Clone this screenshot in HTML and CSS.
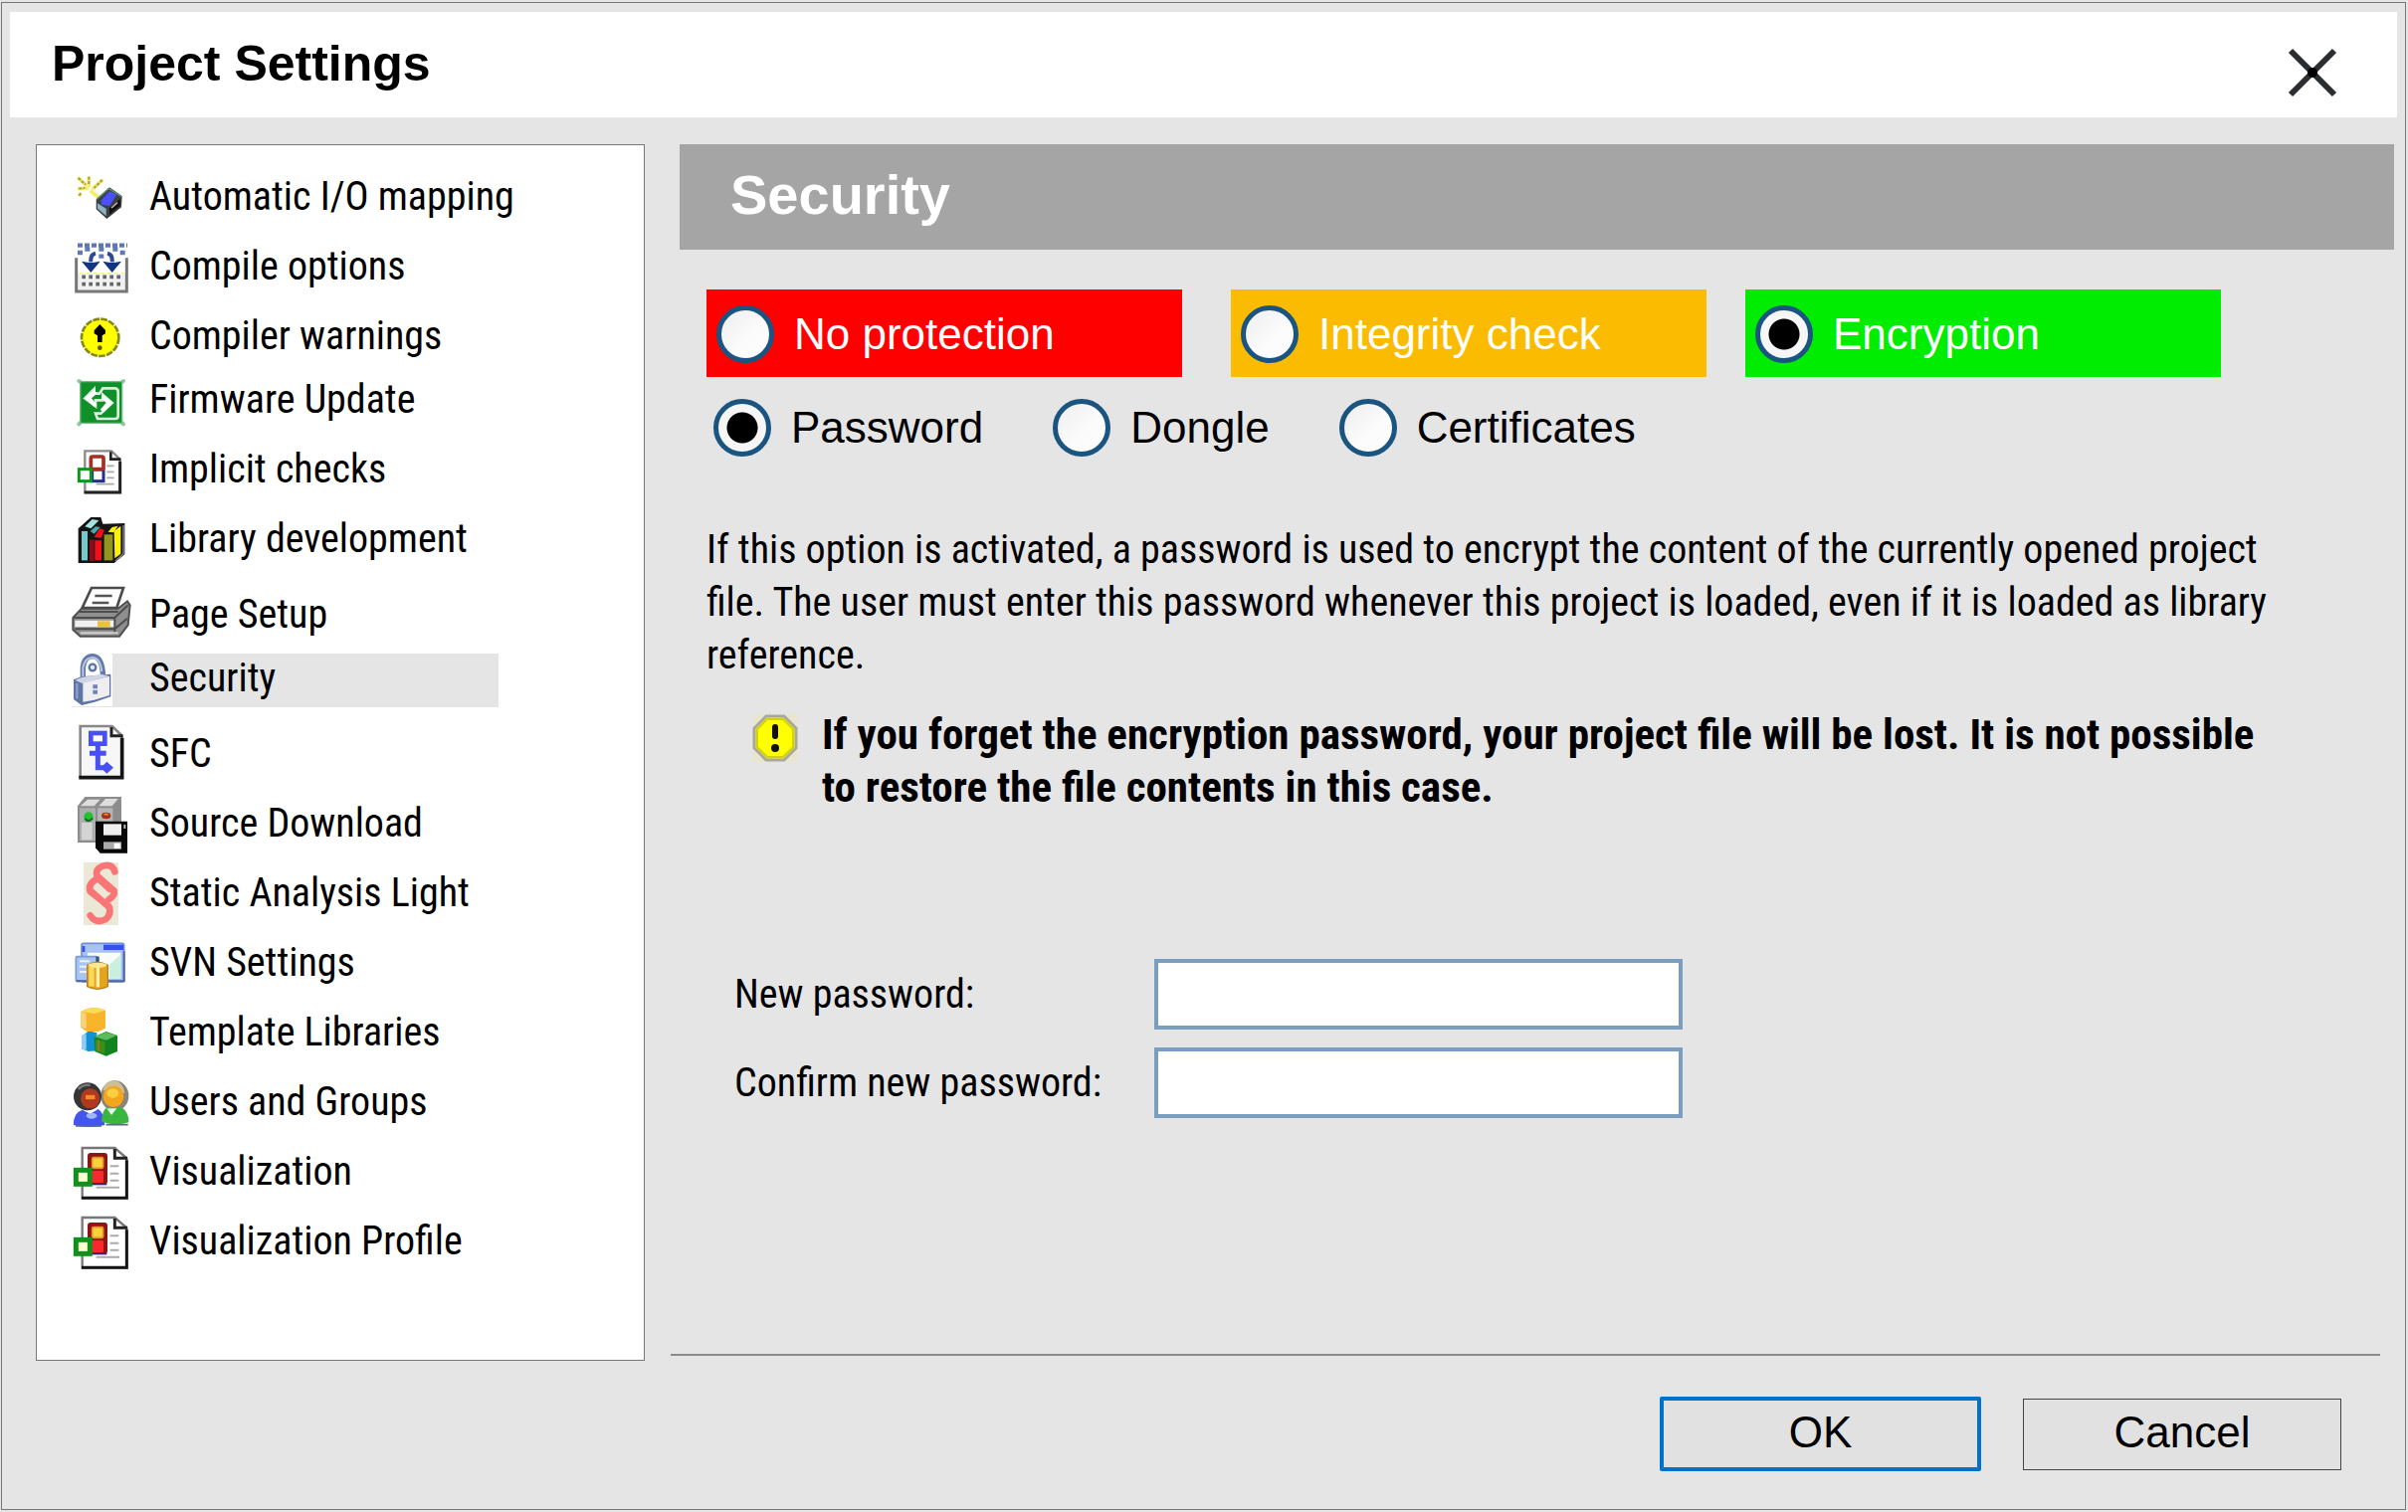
FILE: index.html
```html
<!DOCTYPE html>
<html lang="en">
<head>
  <meta charset="UTF-8">
  <title>Project Settings</title>
  <link rel="stylesheet" href="styles.css">
</head>
<body>
  <div class="dialog">
    <header class="titlebar">
      <h1>Project Settings</h1>
      <button type="button" class="close" aria-label="Close">
        <svg viewBox="0 0 50 50"><path d="M3 3L47 47M47 3L3 47" stroke="#2b2e30" stroke-width="6"/><circle cx="25" cy="25" r="5"/></svg>
      </button>
    </header>

    <div class="body">
      <nav class="sidebar">
        <ul>
          <li><a href="#">
            <svg class="icon" viewBox="36 36 180 162">
              <path d="M54 52L82 76M88 48V80M130 58L98 88M54 86L88 84M58 108L64 98M92 92L116 112" stroke="#f4ee6a" stroke-width="11"/>
              <path d="M56 54L78 74M88 50V76M128 60L104 84M58 86L76 84M58 107L64 100" stroke="#a79a4c" stroke-width="6" stroke-dasharray="9 4"/>
              <path d="M110 118L150 82L188 108L186 142L142 177L110 148Z" fill="#3b4143"/>
              <path d="M124 122L150 94L172 104L150 138L126 134Z" fill="#4a50fa"/>
              <path d="M114 130L140 146V168L114 146Z" fill="#8fb3c0"/>
              <path d="M150 144L182 118V138L150 164Z" fill="#111"/>
              <path d="M156 144L174 128" stroke="#c9a9a9" stroke-width="5"/>
              <path d="M112 118L148 86L186 110" fill="none" stroke="#5f8d72" stroke-width="4"/>
            </svg>
            <span>Automatic I/O mapping</span></a></li>
          <li><a href="#">
            <svg class="icon" viewBox="36 249 180 162">
              <path d="M50 298V399H202V298" fill="#f1f1f1" stroke="#777" stroke-width="9"/>
              <path d="M56 290H196V346H56Z" fill="#fff"/>
              <path d="M54 260H204M54 282H70M182 282H200M76 272H92M118 272H134M160 272H176M118 293H134" stroke="#6079b5" stroke-width="13" stroke-dasharray="15 6"/>
              <path d="M108 284Q92 288 94 310M144 284Q160 288 158 310" fill="none" stroke="#2d4b93" stroke-width="12"/>
              <path d="M66 308L88 312H100L122 308L94 342ZM130 308L152 312H164L186 308L158 342Z" fill="#123681"/>
              <path d="M67 355H190M67 377H190" stroke="#666" stroke-width="11" stroke-dasharray="11 10"/>
              <path d="M60 344H194" stroke="#f5ef8a" stroke-width="4" stroke-dasharray="12 9"/>
            </svg>
            <span>Compile options</span></a></li>
          <li><a href="#">
            <svg class="icon" viewBox="36 459 180 162">
              <circle cx="122" cy="538" r="56" fill="#ff0" stroke="#85891a" stroke-width="8" stroke-dasharray="20 4"/>
              <path d="M121 498L138 516V526L128 532V552H114V532L104 526V516Z"/>
              <circle cx="121" cy="569" r="7" fill="#5c5c00"/>
            </svg>
            <span>Compiler warnings</span></a></li>
          <li class="tight"><a href="#">
            <svg class="icon" viewBox="36 48 180 162">
              <path d="M58 66L66 72M192 66L184 72M58 196L66 188M192 196L184 188" stroke="#8cc89c" stroke-width="12" stroke-linecap="round"/>
              <path d="M62 68H188V193H62Z" fill="#109028" stroke="#74bd88" stroke-width="4"/>
              <path d="M76 118L104 90V104H120L130 88H168Q176 90 176 98V172Q176 180 168 180H114L108 164H124L158 132L130 108V124H108V142Z" fill="none" stroke="#d9f0df" stroke-width="8"/>
              <path d="M76 118L104 92L112 104L96 118L112 138L104 144ZM158 132L132 108L126 118L140 132L122 152L132 160Z" fill="#fff"/>
            </svg>
            <span>Firmware Update</span></a></li>
          <li><a href="#">
            <svg class="icon" viewBox="36 258 180 162">
              <path d="M76 277H156L182 302V402H76Z" fill="#fff" stroke="#8b8b8b" stroke-width="7"/>
              <path d="M182 308V402H74" fill="none" stroke="#222" stroke-width="9"/>
              <path d="M154 280V302H184" fill="none" stroke="#222" stroke-width="8"/>
              <path d="M142 322H164M142 340H164M142 358H164M110 377H164" stroke="#aaa" stroke-width="5"/>
              <rect x="98" y="333" width="34" height="35" fill="#fff" stroke="#232d92" stroke-width="9"/>
              <rect x="94" y="294" width="38" height="38" rx="5" fill="#fff" stroke="#a53020" stroke-width="11"/>
              <rect x="58" y="332" width="36" height="36" fill="#fff" stroke="#10961d" stroke-width="9"/>
            </svg>
            <span>Implicit checks</span></a></li>
          <li><a href="#">
            <svg class="icon" viewBox="36 471 180 162">
              <path d="M56 514L94 480H124L130 500L196 498V592L164 618H56Z" fill="#151515"/>
              <path d="M66 522H84V610H66Z" fill="#79c8ca"/>
              <path d="M76 508L98 486L118 490L94 514Z" fill="#a5e4e0"/>
              <path d="M92 522L108 508L122 510L104 530Z" fill="#4ba7ad"/>
              <path d="M90 548H104V612H90Z" fill="#8a0c18"/>
              <path d="M106 550H126V610H106ZM104 540L120 514L134 518L126 542Z" fill="#ef1018"/>
              <path d="M134 532H160V610H134Z" fill="#94951f"/>
              <path d="M164 522L184 506V590L166 604ZM146 524L158 510L176 506L162 526Z" fill="#fff200"/>
              <path d="M192 504V590L168 612" fill="none" stroke="#87869a" stroke-width="4"/>
            </svg>
            <span>Library development</span></a></li>
          <li class="loose"><a href="#">
            <svg class="icon" viewBox="36 72 180 162">
              <path d="M40 156L66 128H176L204 106L212 118L206 178L180 212H62L40 192Z" fill="#8f8f8f" stroke="#505050" stroke-width="6"/>
              <path d="M96 66H192L172 126H68Z" fill="#fff" stroke="#4b4b4b" stroke-width="8"/>
              <path d="M106 90H158M98 111H148" stroke="#555" stroke-width="7"/>
              <path d="M46 164H166V184H46Z" fill="#f1f1f1"/>
              <path d="M44 156H166L206 118M46 190H166L204 158M166 158V206M60 138H176" fill="none" stroke="#4d4d4d" stroke-width="6"/>
              <path d="M62 202H176" stroke="#ccc" stroke-width="7"/>
              <path d="M114 175H152" stroke="#e8c33c" stroke-width="18"/>
            </svg>
            <span>Page Setup</span></a></li>
          <li class="tight selected"><a href="#" aria-current="page">
            <svg class="icon" viewBox="36 264 180 162">
              <path d="M36 264H159V423H36Z" fill="#fff"/>
              <path d="M70 344V306Q74 272 100 272Q126 274 130 322V342" fill="none" stroke="#6279aa" stroke-width="16"/>
              <path d="M70 342V306Q76 276 100 276Q122 278 127 318" fill="none" stroke="#bcc7df" stroke-width="6"/>
              <circle cx="99" cy="306" r="10" fill="#e9ecf4" stroke="#5d74a6" stroke-width="7"/>
              <path d="M42 342L66 334L154 326V394L106 410L66 420L42 402Z" fill="#5f75a8"/>
              <path d="M70 352L150 332V390L104 404L70 410Z" fill="#eeeef0"/>
              <path d="M46 344L68 354L148 332L126 326L66 336Z" fill="#cfd5e3"/>
              <path d="M52 354V400" stroke="#8ea0c8" stroke-width="7"/>
              <path d="M107 358V390" stroke="#7183b2" stroke-width="14" stroke-dasharray="12 4"/>
            </svg>
            <span>Security</span></a></li>
          <li class="loose"><a href="#">
            <svg class="icon" viewBox="36 486 180 162">
              <path d="M62 477H158L188 506V632H62Z" fill="#f7f7f7" stroke="#888" stroke-width="8"/>
              <path d="M188 512V632H58" fill="none" stroke="#151515" stroke-width="11"/>
              <path d="M156 480V506H190" fill="none" stroke="#222" stroke-width="9"/>
              <rect x="94" y="498" width="42" height="32" fill="#fff" stroke="#4850f5" stroke-width="14"/>
              <path d="M115 530V602H140M90 559H140" fill="none" stroke="#4850f5" stroke-width="15"/>
              <path d="M142 584L162 602L142 620L124 602Z" fill="#4850f5"/>
            </svg>
            <span>SFC</span></a></li>
          <li><a href="#">
            <svg class="icon" viewBox="36 66 180 162">
              <path d="M54 88L76 60H186V186L160 198H54Z" fill="#8d8d8d"/>
              <path d="M62 88L84 68H122L104 88ZM118 88L138 66H176L158 88Z" fill="#ddd"/>
              <path d="M60 94H108V192H60Z" fill="#aeaeae"/>
              <path d="M66 138H98V190H66Z" fill="#d4d4d4"/>
              <path d="M114 94H160V134H114Z" fill="#b5b5b5"/>
              <circle cx="87" cy="120" r="14" fill="#21c232"/>
              <path d="M76 126Q88 140 99 124" fill="none" stroke="#136b20" stroke-width="6"/>
              <ellipse cx="140" cy="117" rx="14" ry="10" fill="#a43119"/>
              <path d="M134 113H146" stroke="#ec9a34" stroke-width="5"/>
              <path d="M108 134H204V230H122L108 214Z" fill="#080808"/>
              <path d="M132 142H186V176H132Z" fill="#eee"/>
              <path d="M132 196H186V218H132Z" fill="#aaa"/>
              <path d="M164 200H182V216H164Z" fill="#fff"/>
              <path d="M196 144V156" stroke="#bbb" stroke-width="6"/>
            </svg>
            <span>Source Download</span></a></li>
          <li><a href="#">
            <svg class="icon" viewBox="36 282 180 162">
              <path d="M72 264H177V453H72Z" fill="#ece8d8"/>
              <path d="M166 292Q160 270 138 273Q106 280 112 304L164 350Q168 364 148 376M150 344L116 312Q84 326 92 352L148 396Q158 420 138 436Q108 450 92 424M94 350L150 400" fill="none" stroke="#fa7676" stroke-width="20" stroke-linecap="round"/>
            </svg>
            <span>Static Analysis Light</span></a></li>
          <li><a href="#">
            <svg class="icon" viewBox="36 480 180 162">
              <rect x="66" y="496" width="128" height="116" rx="6" fill="#a9c2ef" stroke="#6f90d4" stroke-width="5"/>
              <path d="M132 500H192V516H132Z" fill="#3450f0"/>
              <path d="M68 504H76V522H68Z" fill="#3450f0"/>
              <path d="M84 524H184V602H84Z" fill="#fafbfb"/>
              <path d="M150 560L184 530V602H150Z" fill="#c9f0df"/>
              <rect x="49" y="536" width="66" height="74" rx="5" fill="#a8c6f4" stroke="#7a9ada" stroke-width="5"/>
              <path d="M60 550H90M60 566H82M60 582H82" stroke="#e7f1ff" stroke-width="6"/>
              <path d="M50 610H194V520" fill="none" stroke="#4964aa" stroke-width="6"/>
              <path d="M114 536V552" stroke="#355577" stroke-width="10"/>
              <path d="M83 562Q114 544 145 562V626Q114 642 83 626Z" fill="#e3a51e" stroke="#bd7e20" stroke-width="4"/>
              <path d="M88 566H104V626H88Z" fill="#f9d85a"/>
              <path d="M110 566H120V628H110Z" fill="#fdf0a4"/>
              <ellipse cx="114" cy="562" rx="28" ry="8" fill="#fbe890"/>
            </svg>
            <span>SVN Settings</span></a></li>
          <li><a href="#">
            <svg class="icon" viewBox="36 90 180 162">
              <path d="M66 176L88 160L112 166V220L86 222L66 214Z" fill="#1191d6"/>
              <path d="M66 176L80 168V218L66 214Z" fill="#98cbf3"/>
              <path d="M64 102Q100 80 138 98V152L116 162H82L64 150Z" fill="#f8b52c"/>
              <path d="M66 102Q100 82 136 98L106 108Z" fill="#fbdc55"/>
              <path d="M64 102L80 108V154L64 148Z" fill="#fbd277"/>
              <path d="M104 178L140 162L174 174V222L140 236L106 222Z" fill="#118421"/>
              <path d="M104 178L140 164L172 174L140 188Z" fill="#5dba5d"/>
              <path d="M108 186L136 192V230L108 218Z" fill="#3f8c1a"/>
              <path d="M117 188V222" stroke="#a97f20" stroke-width="4"/>
            </svg>
            <span>Template Libraries</span></a></li>
          <li><a href="#">
            <svg class="icon" viewBox="36 294 180 162">
              <ellipse cx="166" cy="350" rx="42" ry="46" fill="#8c8577"/>
              <ellipse cx="84" cy="352" rx="42" ry="42" fill="#353535"/>
              <path d="M56 330Q70 314 92 318" fill="none" stroke="#777" stroke-width="8"/>
              <ellipse cx="92" cy="358" rx="29" ry="30" fill="#b13920"/>
              <path d="M78 354H106" stroke="#f58a28" stroke-width="13"/>
              <path d="M130 334Q136 304 164 304Q192 308 196 342Z" fill="#cbbf97"/>
              <ellipse cx="162" cy="352" rx="31" ry="32" fill="#f3a51e"/>
              <ellipse cx="160" cy="342" rx="18" ry="14" fill="#fbd040"/>
              <path d="M42 438Q40 402 68 392L92 404L116 390Q134 400 136 438Q90 450 42 438Z" fill="#4355ef"/>
              <ellipse cx="96" cy="410" rx="16" ry="9" fill="#9db8f8"/>
              <path d="M126 426Q128 392 144 384H186Q210 400 208 430Q170 442 132 430Z" fill="#39b540"/>
              <path d="M142 388L156 408L172 388Z" fill="#eaf4e6"/>
              <path d="M48 441H126M140 437H206" stroke="#5a6b84" stroke-width="5"/>
            </svg>
            <span>Users and Groups</span></a></li>
          <li><a href="#">
            <svg class="icon" viewBox="36 516 180 162">
              <g id="visu">
                <path d="M68 519H166L202 550V670H68Z" fill="#fff" stroke="#777" stroke-width="7"/>
                <path d="M202 556V670H66" fill="none" stroke="#151515" stroke-width="9"/>
                <path d="M166 522V550H204" fill="none" stroke="#222" stroke-width="9"/>
                <path d="M152 574H178M152 596H178M152 617H178M110 638H180" stroke="#aaa" stroke-width="6"/>
                <path d="M94 588H142V631H94Z" fill="#1c2a8c"/>
                <rect x="84" y="534" width="60" height="94" rx="9" fill="#8d1513"/>
                <rect x="98" y="548" width="33" height="32" rx="4" fill="#f5d33c" stroke="#ec8e26" stroke-width="5"/>
                <rect x="96" y="588" width="36" height="36" rx="4" fill="#f8282e"/>
                <rect x="49" y="586" width="42" height="42" fill="#fbffd0" stroke="#12901d" stroke-width="15"/>
              </g>
            </svg>
            <span>Visualization</span></a></li>
          <li><a href="#">
            <svg class="icon" viewBox="36 516 180 162"><use href="#visu"/></svg>
            <span>Visualization Profile</span></a></li>
        </ul>
      </nav>

      <main class="content">
        <h2>Security</h2>

        <form id="securityForm">
          <div class="levels">
            <label class="level red"><input type="radio" name="level">No protection</label>
            <label class="level amber"><input type="radio" name="level">Integrity check</label>
            <label class="level green"><input type="radio" name="level" checked>Encryption</label>
          </div>

          <div class="methods">
            <label><input type="radio" name="method" checked>Password</label>
            <label><input type="radio" name="method">Dongle</label>
            <label><input type="radio" name="method">Certificates</label>
          </div>

          <p class="info">If this option is activated, a password is used to encrypt the content of the currently opened project file. The user must enter this password whenever this project is loaded, even if it is loaded as library reference.</p>

          <div class="warning">
            <svg viewBox="0 0 46 48">
              <path d="M0 0H46V48H0Z" fill="#e9e5d0"/>
              <path d="M14 2H32L44 14V34L32 46H14L2 34V14Z" fill="#ff0" stroke="#a8a8a0" stroke-width="3"/>
              <path d="M15 5H31L41 15V33L31 43H15L5 33V15Z" fill="none" stroke="#d2cf14" stroke-width="2"/>
              <path d="M23 13V22" stroke="#111" stroke-width="6" stroke-linecap="round"/>
              <circle cx="23" cy="34" r="4" fill="#111"/>
            </svg>
            <p>If you forget the encryption password, your project file will be lost. It is not possible to restore the file contents in this case.</p>
          </div>

          <div class="fields">
            <label for="newPassword">New password:</label>
            <input type="password" id="newPassword" name="newPassword">
            <label for="confirmPassword">Confirm new password:</label>
            <input type="password" id="confirmPassword" name="confirmPassword">
          </div>
        </form>
      </main>
    </div>

    <footer class="buttons">
      <button type="submit" form="securityForm" class="ok">OK</button>
      <button type="button">Cancel</button>
    </footer>
  </div>
</body>
</html>
```

FILE: styles.css
```css
* {
  box-sizing: border-box;
}
body {
  margin: 0;
  padding: 2px 2px 2px 1px;
  background: #e5e5e5;
  color: #000;
  font-family: "Liberation Sans", Arial, sans-serif;
  font-size: 44px;
}
h1, h2, p, ul {
  margin: 0;
  padding: 0;
}
.dialog {
  min-height: calc(100vh - 4px);
  padding: 9px 8px;
  border: 1px solid #777;
}

.titlebar {
  display: flex;
  justify-content: space-between;
  height: 106px;
  padding: 0 60px 0 42px;
  background: #fff;
}
h1 {
  font-size: 50px;
  line-height: 104px;
}
.close {
  width: 50px;
  height: 50px;
  margin-top: 36px;
  padding: 0;
  border: none;
  background: none;
}
.close svg {
  display: block;
}

.body {
  display: flex;
  align-items: flex-start;
  padding: 27px 0 0 26px;
}

.sidebar, .info, .warning, .fields {
  font-family: "Roboto Condensed", "Liberation Sans", sans-serif;
  font-size: 40px;
}
.sidebar {
  flex: none;
  width: 612px;
  min-height: 1223px;
  padding: 11px 0 0 35px;
  background: #fff;
  border: 1px solid #777;
}
.sidebar ul {
  list-style: none;
}
.sidebar li {
  width: 429px;
  margin-top: 16px;
}
.sidebar li.tight {
  margin-top: 10px;
}
.sidebar li.loose {
  margin-top: 22px;
}
.sidebar li.selected {
  background: #e5e5e5;
}
.sidebar a {
  display: flex;
  gap: 18px;
  height: 54px;
  line-height: 50px;
  color: inherit;
  text-decoration: none;
  white-space: nowrap;
}
.icon {
  flex: none;
  width: 60px;
  height: 54px;
  overflow: visible;
}

.content {
  flex: 1;
  min-height: 1218px;
  margin: 0 17px 0 26px;
  border-bottom: 2px solid #8c8c8c;
}
h2 {
  height: 106px;
  margin: 0 -14px 0 9px;
  padding-left: 51px;
  background: #a5a5a5;
  color: #fff;
  font-size: 56px;
  line-height: 102px;
}
form {
  padding: 40px 0 0 36px;
}

.levels {
  display: grid;
  grid-template-columns: 527px 517px 478px;
}
.levels label, .methods label {
  display: flex;
  align-items: center;
  gap: 20px;
}
.level {
  height: 88px;
  width: 478px;
  padding: 2px 0 0 10px;
  color: #fff;
}
.red {
  background: #f00;
}
.amber {
  background: #fabb00;
}
.green {
  background: #00ec00;
}
input[type="radio"] {
  appearance: none;
  width: 58px;
  height: 58px;
  margin: 0;
  border: 5px solid #1a5480;
  border-radius: 50%;
  background: linear-gradient(135deg, #eee, #fcfcfc 60%);
}
input[type="radio"]:checked {
  background: radial-gradient(circle, #000 15px, #f6f6f6 16px);
}
.methods {
  display: flex;
  gap: 70px;
  margin-top: 22px;
  padding-left: 7px;
}

.info {
  max-width: 1600px;
  margin-top: 67px;
  line-height: 53px;
}
.warning {
  display: flex;
  gap: 24px;
  max-width: 1560px;
  margin-top: 27px;
  padding-left: 46px;
  font-size: 43px;
  font-weight: bold;
  line-height: 53px;
}
.warning svg {
  flex: none;
  width: 46px;
  height: 48px;
  margin-top: 6px;
}

.fields {
  display: grid;
  grid-template-columns: 422px 531px;
  gap: 18px 0;
  margin-top: 146px;
  padding-left: 28px;
}
.fields label {
  line-height: 71px;
}
.fields input {
  height: 71px;
  padding: 0 12px;
  border: 4px solid #7a9ebf;
  background: #fff;
  font-size: 40px;
}

.buttons {
  display: flex;
  justify-content: flex-end;
  align-items: center;
  gap: 42px;
  padding: 36px 56px 0 0;
}
.buttons button {
  width: 320px;
  height: 72px;
  padding: 0 0 4px;
  border: 1px solid #444;
  background: #e1e1e1;
  color: #000;
  font-family: inherit;
  font-size: 44px;
}
.buttons .ok {
  width: 323px;
  height: 75px;
  border: 4px solid #0072c9;
  border-radius: 2px;
}
```
